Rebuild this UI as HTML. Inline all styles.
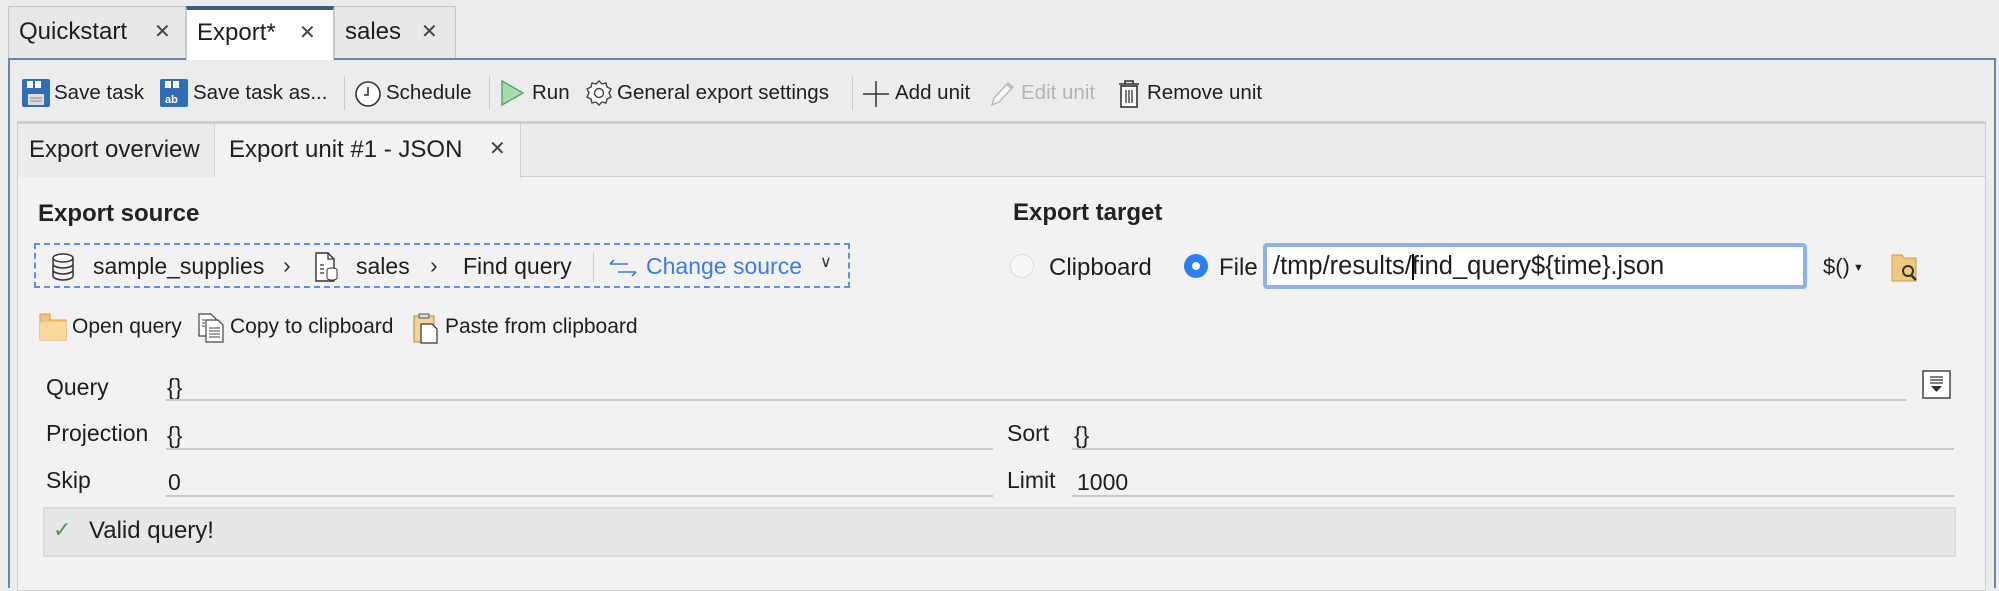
<!DOCTYPE html>
<html><head><meta charset="utf-8"><style>
*{box-sizing:border-box;margin:0;padding:0}
body{width:1999px;height:580px;background:#ececec;font-family:"Liberation Sans",sans-serif;font-size:23px;color:#1e1e1e;position:relative;overflow:hidden}
.a{position:absolute;white-space:nowrap}
.tab{position:absolute;top:6px;height:53px;border:1px solid #c8c8c8;border-bottom:none;background:#e8e8e8;font-size:24px;line-height:50px;padding-left:10px}
.x{position:absolute;font-size:20px;color:#444}
.ul{position:absolute;height:2px;background:#c9c9c9}
.lbl{position:absolute;font-size:23px}
.tb{font-size:20.5px}
.br{font-size:23px}
svg{position:absolute}
</style></head><body>
<div class="tab" style="left:8px;width:178px">Quickstart<span class="x" style="left:145px">✕</span></div>
<div class="tab" style="left:186px;width:148px;background:#fff;height:54px;border-top:4px solid #3d5a80;z-index:3;line-height:46px">Export*<span class="x" style="left:112px">✕</span></div>
<div class="tab" style="left:334px;width:122px">sales<span class="x" style="left:86px">✕</span></div>
<div class="a" style="left:8px;top:58px;width:1988px;height:530px;border:2px solid #6d86a6;border-bottom:none;background:#ececec"></div>
<svg style="left:22px;top:79px" width="28" height="28" viewBox="0 0 28 28"><rect x="0" y="0" width="28" height="28" rx="2" fill="#2f6db5"/><rect x="5" y="2" width="6" height="7" fill="#fff"/><rect x="13" y="2" width="6" height="7" fill="#fff"/><rect x="6" y="15" width="16" height="11" fill="#ddd"/><path d="M8 19h12M8 22h12" stroke="#888"/></svg>
<div class="a tb" style="left:54px;top:81px">Save task</div>
<svg style="left:160px;top:79px" width="28" height="28" viewBox="0 0 28 28"><rect width="28" height="28" rx="2" fill="#2f6db5"/><rect x="5" y="2" width="6" height="7" fill="#fff"/><rect x="13" y="2" width="6" height="7" fill="#fff"/><text x="5" y="24" font-size="11" fill="#fff" font-weight="bold" font-family="Liberation Sans">ab</text></svg>
<div class="a tb" style="left:193px;top:81px">Save task as...</div>
<div class="a" style="left:344px;top:76px;width:1px;height:34px;background:#ccc"></div>
<svg style="left:354px;top:80px" width="28" height="28"><circle cx="14" cy="14" r="12" fill="#fff" stroke="#333" stroke-width="1.6"/><path d="M14 7v8h-4" stroke="#333" stroke-width="1.6" fill="none"/></svg>
<div class="a tb" style="left:386px;top:81px">Schedule</div>
<div class="a" style="left:489px;top:76px;width:1px;height:34px;background:#ccc"></div>
<svg style="left:500px;top:79px" width="26" height="28"><path d="M2 2L23 14L2 26Z" fill="#a8dcae" stroke="#5aa865" stroke-width="1.5"/></svg>
<div class="a tb" style="left:532px;top:81px">Run</div>
<svg style="left:585px;top:79px" width="28" height="28" viewBox="0 0 28 28"><path d="M14 2l3 3 4-1 1 4 4 2-2 4 2 4-4 2-1 4-4-1-3 3-3-3-4 1-1-4-4-2 2-4-2-4 4-2 1-4 4 1z" fill="#fff" stroke="#444" stroke-width="1.4"/><circle cx="14" cy="14" r="4.5" fill="none" stroke="#444" stroke-width="1.4"/></svg>
<div class="a tb" style="left:617px;top:81px">General export settings</div>
<div class="a" style="left:852px;top:76px;width:1px;height:34px;background:#ccc"></div>
<svg style="left:862px;top:80px" width="28" height="28"><path d="M14 1v26M1 14h26" stroke="#333" stroke-width="1.5"/></svg>
<div class="a tb" style="left:895px;top:81px">Add unit</div>
<svg style="left:988px;top:79px" width="30" height="30"><path d="M4 26l2-7L20 4l5 4-14 15z" fill="#f8f8f8" stroke="#bbb" stroke-width="1.5"/><path d="M19 5l5 4" stroke="#bbb" stroke-width="3"/></svg>
<div class="a tb" style="left:1021px;top:81px;color:#b5b5b5">Edit unit</div>
<svg style="left:1117px;top:79px" width="24" height="30"><path d="M2 5h20M8 5V2h8v3" stroke="#333" stroke-width="1.6" fill="none"/><rect x="4" y="7" width="16" height="21" fill="#fff" stroke="#333" stroke-width="1.6"/><path d="M9 11v13M12 11v13M15 11v13" stroke="#333" stroke-width="1.3"/></svg>
<div class="a tb" style="left:1147px;top:81px">Remove unit</div>
<div class="a" style="left:17px;top:121px;width:1969px;height:470px;border:1px solid #cfcfcf;background:#f2f2f2"></div>
<div class="a" style="left:17px;top:121px;width:1969px;height:56px;background:#ebebeb;border:1px solid #cfcfcf;border-top:3px solid #cfcfcf"></div>
<div class="a" style="left:18px;top:124px;width:197px;height:53px;background:#ebebeb;font-size:24px;line-height:51px;padding-left:11px;border-right:1px solid #d5d5d5">Export overview</div>
<div class="a" style="left:215px;top:124px;width:306px;height:54px;background:#f2f2f2;border-right:1px solid #cfcfcf;font-size:24px;line-height:51px;padding-left:14px">Export unit #1 - JSON<span class="x" style="left:274px">✕</span></div>
<div class="a" style="left:38px;top:200px;font-size:24px;font-weight:bold;color:#222">Export source</div>
<div class="a" style="left:34px;top:243px;width:816px;height:45px;border:2px dashed #5a8ff0"></div>
<svg style="left:50px;top:252px" width="26" height="30"><ellipse cx="13" cy="6" rx="10" ry="4" fill="#fff" stroke="#333" stroke-width="1.5"/><path d="M3 6v18c0 2 4.5 4 10 4s10-2 10-4V6M3 12c0 2 4.5 4 10 4s10-2 10-4M3 18c0 2 4.5 4 10 4s10-2 10-4" fill="none" stroke="#333" stroke-width="1.5"/></svg>
<div class="a br" style="left:93px;top:253px">sample_supplies</div>
<div class="a" style="left:283px;top:252px;color:#333">›</div>
<svg style="left:314px;top:251px" width="26" height="32"><path d="M2 2h12l6 6v22H2z" fill="#fff" stroke="#333" stroke-width="1.4"/><path d="M14 2v6h6M6 14h4M6 18h4M6 22h4" stroke="#333" stroke-width="1.3" fill="none"/><ellipse cx="18" cy="19" rx="5" ry="2" fill="#fff" stroke="#333"/><path d="M13 19v8c0 1 2 2 5 2s5-1 5-2v-8" fill="#fff" stroke="#333"/></svg>
<div class="a br" style="left:356px;top:253px">sales</div>
<div class="a" style="left:430px;top:252px;color:#333">›</div>
<div class="a br" style="left:463px;top:253px">Find query</div>
<div class="a" style="left:593px;top:252px;width:1px;height:30px;background:#ccc"></div>
<svg style="left:608px;top:258px" width="30" height="20"><path d="M2 6h18M2 6l4-4M28 14H10M28 14l-4 4" stroke="#3d7be0" stroke-width="1.6" fill="none"/></svg>
<div class="a br" style="left:646px;top:253px;color:#3d7be0">Change source</div>
<div class="a" style="left:820px;top:252px;font-size:16px;color:#333">∨</div>
<svg style="left:39px;top:312px" width="28" height="30"><path d="M1 2h10v6h16v20H1z" fill="#f2c37a" stroke="#d4a04d"/><path d="M1 10h26v18H1z" fill="#fad79a"/></svg>
<div class="a" style="left:72px;top:315px;font-size:21px">Open query</div>
<svg style="left:197px;top:312px" width="30" height="32"><path d="M2 2h12l5 5v17H2z" fill="#fff" stroke="#444" stroke-width="1.2"/><path d="M9 8h12l5 5v17H9z" fill="#fff" stroke="#444" stroke-width="1.2"/><path d="M12 16h11M12 19h11M12 22h11M12 25h11M5 8h3M5 11h3M5 14h3" stroke="#444"/></svg>
<div class="a" style="left:230px;top:315px;font-size:21px">Copy to clipboard</div>
<svg style="left:412px;top:312px" width="28" height="32"><rect x="2" y="4" width="20" height="26" fill="#f2d49a" stroke="#b08a50"/><rect x="7" y="2" width="10" height="4" fill="#ddd" stroke="#555"/><path d="M9 12h11l5 5v14H9z" fill="#fff" stroke="#333" stroke-width="1.2"/></svg>
<div class="a" style="left:445px;top:315px;font-size:21px">Paste from clipboard</div>
<div class="lbl" style="left:46px;top:374px">Query</div>
<div class="a" style="left:167px;top:374px">{}</div>
<div class="ul" style="left:166px;top:399px;width:1740px"></div>
<svg style="left:1922px;top:370px" width="30" height="30"><rect x="1" y="1" width="27" height="27" fill="#fff" stroke="#444" stroke-width="1.5"/><path d="M8 7h13M8 10h13M8 13h13" stroke="#555" stroke-width="1.4"/><path d="M9 16h11l-5.5 6z" fill="#333"/></svg>
<div class="lbl" style="left:46px;top:420px">Projection</div>
<div class="a" style="left:167px;top:422px">{}</div>
<div class="ul" style="left:166px;top:448px;width:827px"></div>
<div class="lbl" style="left:1007px;top:420px">Sort</div>
<div class="a" style="left:1074px;top:422px">{}</div>
<div class="ul" style="left:1072px;top:448px;width:882px"></div>
<div class="lbl" style="left:46px;top:467px">Skip</div>
<div class="a" style="left:168px;top:469px">0</div>
<div class="ul" style="left:166px;top:495px;width:827px"></div>
<div class="lbl" style="left:1007px;top:467px">Limit</div>
<div class="a" style="left:1077px;top:469px">1000</div>
<div class="ul" style="left:1072px;top:495px;width:882px"></div>
<div class="a" style="left:43px;top:507px;width:1913px;height:50px;background:#e7e7e7;border:2px solid #dadada"></div>
<div class="a" style="left:53px;top:517px;color:#4a9a5a;font-size:22px">✓</div>
<div class="a" style="left:89px;top:517px;font-size:24px">Valid query!</div>
<div class="a" style="left:1013px;top:199px;font-size:24px;font-weight:bold;color:#222">Export target</div>
<div class="a" style="left:1010px;top:254px;width:24px;height:24px;border-radius:50%;border:1px solid #ddd;background:#f8f8f8"></div>
<div class="a" style="left:1049px;top:254px;font-size:24px">Clipboard</div>
<div class="a" style="left:1184px;top:254px;width:24px;height:24px;border-radius:50%;background:#2a7ff6"></div>
<div class="a" style="left:1192px;top:262px;width:8px;height:8px;border-radius:50%;background:#fff"></div>
<div class="a" style="left:1219px;top:254px;font-size:24px">File</div>
<div class="a" style="left:1263px;top:243px;width:544px;height:46px;border:4px solid #8fb2ee;border-radius:4px;background:#fff"></div>
<div class="a" style="left:1273px;top:252px;font-size:25.5px">/tmp/results/<span style="display:inline-block;width:2px;height:26px;background:#000;vertical-align:middle;margin-right:-2px"></span>find_query${time}.json</div>
<div class="a" style="left:1823px;top:254px;font-size:22px">$()<span style="font-size:11px;vertical-align:middle"> ▼</span></div>
<svg style="left:1891px;top:252px" width="32" height="32"><path d="M1 3h10l2 3h12v23H1z" fill="#f0c781" stroke="#c99a4c"/><circle cx="17" cy="19" r="5" fill="none" stroke="#333" stroke-width="2"/><path d="M20 23l5 5" stroke="#333" stroke-width="2.5"/></svg>
</body></html>
